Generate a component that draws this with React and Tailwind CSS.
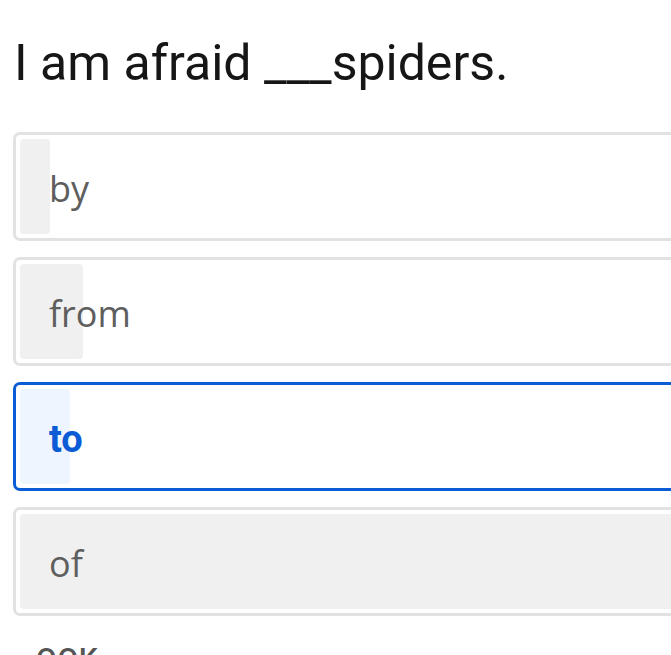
import React from 'react';

const options = [
  { label: 'by', fill: 30, state: 'idle' },
  { label: 'from', fill: 63, state: 'idle' },
  { label: 'to', fill: 50, state: 'selected' },
  { label: 'of', fill: null, state: 'filled' },
];

function Option({ label, fill, state }) {
  const selected = state === 'selected';
  const filled = state === 'filled';
  return (
    <div
      className={`w-[720px] h-[109px] rounded-[7px] border-[3px] p-[4px] ${
        selected ? 'border-[#0b5cd5]' : 'border-[#e2e2e2]'
      }`}
    >
      <div className="relative h-full flex items-center">
        <div
          className={`absolute left-0 top-0 bottom-0 rounded-[4px] ${
            selected ? 'bg-[#eef5fe]' : 'bg-[#f0f0f0]'
          } ${filled ? 'right-0' : ''}`}
          style={filled ? undefined : { width: fill }}
        />
        <span
          className={`relative pl-[29px] pt-[4px] leading-none ${
            selected ? 'text-[#0b5cd5] font-bold text-[38px]' : 'text-[#5e5e5e] text-[36px]'
          }`}
          style={{
            fontFamily: selected ? 'Roboto, sans-serif' : '"Open Sans", sans-serif',
          }}
        >
          {label}
        </span>
      </div>
    </div>
  );
}

export default function App() {
  return (
    <div className="w-[671px] h-[655px] overflow-hidden bg-white">
      <h1
        className="pl-[14px] pt-[38px] text-[50px] leading-none text-[#161616] font-normal"
        style={{ fontFamily: 'Roboto, sans-serif' }}
      >
        I am afraid ___spiders.
      </h1>

      <div className="mt-[44px] pl-[13px] flex flex-col gap-[16px]">
        {options.map((o) => (
          <Option key={o.label} {...o} />
        ))}
      </div>

      <div
        className="mt-[28px] pl-[36px] text-[30px] leading-none font-medium text-[#555] tracking-wide"
        style={{ fontFamily: 'Roboto, sans-serif' }}
      >
        OOK
      </div>
    </div>
  );
}
